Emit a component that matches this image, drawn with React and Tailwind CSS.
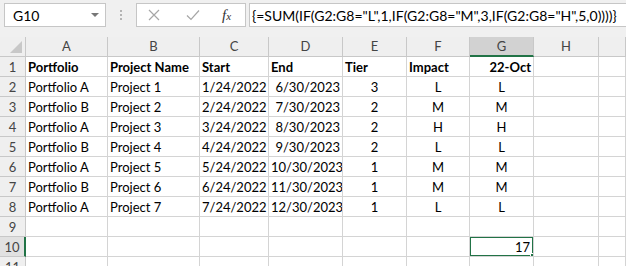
import React from "react";

const COLS = ["A", "B", "C", "D", "E", "F", "G", "H", ""];

const ROWS = [
  { a: "Portfolio", b: "Project Name", c: "Start", d: "End", e: "Tier", f: "Impact", g: "22-Oct", bold: true },
  { a: "Portfolio A", b: "Project 1", c: "1/24/2022", d: "6/30/2023", e: "3", f: "L", g: "L" },
  { a: "Portfolio B", b: "Project 2", c: "2/24/2022", d: "7/30/2023", e: "2", f: "M", g: "M" },
  { a: "Portfolio A", b: "Project 3", c: "3/24/2022", d: "8/30/2023", e: "2", f: "H", g: "H" },
  { a: "Portfolio B", b: "Project 4", c: "4/24/2022", d: "9/30/2023", e: "2", f: "L", g: "L" },
  { a: "Portfolio A", b: "Project 5", c: "5/24/2022", d: "10/30/2023", e: "1", f: "M", g: "M" },
  { a: "Portfolio B", b: "Project 6", c: "6/24/2022", d: "11/30/2023", e: "1", f: "M", g: "M" },
  { a: "Portfolio A", b: "Project 7", c: "7/24/2022", d: "12/30/2023", e: "1", f: "L", g: "L" },
  {},
  { total: "17" },
  {},
];

const cell = "h-[20px] border-r border-b border-[#d4d4d4] px-[2px] leading-[20px] whitespace-nowrap overflow-hidden";

function Row({ n, r }) {
  const head = r.bold;
  const sel = n === 10;
  return (
    <>
      <div className={`h-[20px] border-r border-b border-[#c8c8c8] text-center leading-[20px] text-[#444] ${sel ? "bg-[#e1e1e1] border-r-2 border-r-[#217346]" : "bg-[#efefef]"}`}>{n}</div>
      <div className={`${cell} ${head ? "font-bold" : ""}`}>{r.a}</div>
      <div className={`${cell} ${head ? "font-bold" : ""}`}>{r.b}</div>
      <div className={`${cell} ${head ? "font-bold text-left" : "text-right"}`}>{r.c}</div>
      <div className={`${cell} ${head ? "font-bold text-left" : "text-right"}`}>{r.d}</div>
      <div className={`${cell} ${head ? "font-bold text-left" : "text-center"}`}>{r.e}</div>
      <div className={`${cell} ${head ? "font-bold text-left" : "text-center"}`}>{r.f}</div>
      <div className={`${cell} relative ${head ? "font-bold text-right" : "text-center"}`}>
        {r.g}
        {r.total && (
          <>
            <span className="absolute inset-x-[-1px] top-[-1px] bottom-[-1px] border-2 border-[#217346]" />
            <span className="absolute right-[3px] top-0">{r.total}</span>
            <span className="absolute right-[-3px] bottom-[-3px] w-[6px] h-[6px] bg-[#217346] border border-white" />
          </>
        )}
      </div>
      <div className={cell} />
      <div className={cell} />
    </>
  );
}

export default function App() {
  return (
    <div className="w-[626px] h-[266px] overflow-hidden bg-white text-black text-[13px]" style={{ fontFamily: "Lato, 'Liberation Sans', sans-serif" }}>
      <div className="h-[37px] bg-[#f0f0f0] flex items-start pt-[3px] pl-[4px]">
        <div className="w-[102px] h-[24px] bg-white border border-[#c6c6c6] flex items-center justify-between pl-[8px] pr-[6px] text-[14px]">
          <span>G10</span>
          <span className="w-0 h-0 border-l-[4px] border-r-[4px] border-t-[4px] border-l-transparent border-r-transparent border-t-[#777]" />
        </div>
        <div className="w-[30px] h-[24px] flex flex-col items-center justify-center gap-[2px]">
          <span className="w-[2px] h-[2px] bg-[#b4b4b4]" />
          <span className="w-[2px] h-[2px] bg-[#b4b4b4]" />
          <span className="w-[2px] h-[2px] bg-[#b4b4b4]" />
        </div>
        <div className="w-[110px] h-[24px] bg-white border border-[#c6c6c6] flex items-center">
          <svg width="12" height="12" viewBox="0 0 12 12" className="ml-[11px]">
            <path d="M1 1L11 11M11 1L1 11" stroke="#a6a6a6" strokeWidth="1.2" />
          </svg>
          <svg width="14" height="12" viewBox="0 0 14 12" className="ml-[26px]">
            <path d="M1 6.5L5 10.5L13 1.5" stroke="#a6a6a6" strokeWidth="1.2" fill="none" />
          </svg>
          <span className="ml-[22px] italic text-[15px] text-[#333]" style={{ fontFamily: "'Liberation Serif', serif" }}>f<span className="text-[11px]">x</span></span>
        </div>
        <div className="ml-[3px] flex-1 h-[24px] bg-white border border-[#c6c6c6] border-r-0 flex items-center pl-[2px] text-[14px] whitespace-nowrap overflow-hidden">
          {'{=SUM(IF(G2:G8="L",1,IF(G2:G8="M",3,IF(G2:G8="H",5,0))))}'}
        </div>
      </div>
      <div className="grid grid-cols-[26px_82px_92px_69px_74px_64px_63px_64px_65px_1fr]">
        <div className="h-[20px] bg-[#efefef] border-r border-b border-[#c8c8c8] relative">
          <svg width="12" height="12" viewBox="0 0 12 12" className="absolute right-[3px] bottom-[3px]">
            <path d="M12 0L12 12L0 12Z" fill="#c8c8c8" />
          </svg>
        </div>
        {COLS.map((c, i) => (
          <div
            key={i}
            className={`h-[20px] border-r border-b text-center leading-[19px] text-[#444] ${c === "G" ? "bg-[#d2d2d2] border-b-2 border-b-[#217346] border-r-[#c8c8c8]" : "bg-[#efefef] border-[#c8c8c8]"}`}
          >
            {c}
          </div>
        ))}
        {ROWS.map((r, i) => (
          <Row key={i} n={i + 1} r={r} />
        ))}
      </div>
    </div>
  );
}
